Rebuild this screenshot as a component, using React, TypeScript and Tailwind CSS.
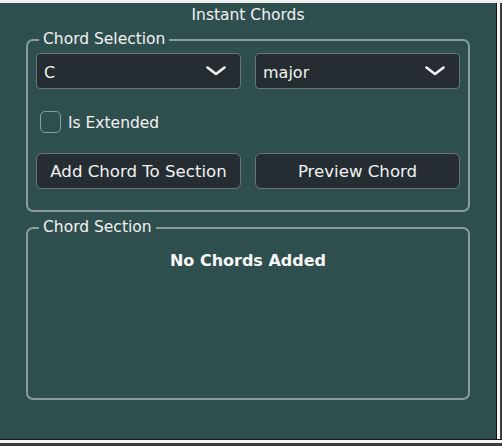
import React from "react";

const font = { fontFamily: '"DejaVu Sans", Verdana, sans-serif' };

function Chevron() {
  return (
    <svg width="20" height="10" viewBox="0 0 20 10" fill="none">
      <polyline points="1.5,1.5 10,8 18.5,1.5" stroke="#f2f2f2" strokeWidth="2.6" strokeLinecap="round" strokeLinejoin="round" />
    </svg>
  );
}

function Select({ value }: { value: string }) {
  return (
    <div className="flex h-[36px] w-[205px] items-center justify-between rounded-[4px] border border-[#66767a] bg-[#252d32] pl-[7px] pr-[14px] text-[16px] text-[#f2f2f2]">
      <span className="pt-[3px]">{value}</span>
      <Chevron />
    </div>
  );
}

function Button({ label }: { label: string }) {
  return (
    <div className="flex h-[36px] w-[205px] items-center justify-center rounded-[6px] border border-[#66767a] bg-[#252d32] pt-[3px] text-[16.6px] text-[#f2f2f2]">
      {label}
    </div>
  );
}

function Group({ title, children, className }: { title: string; children: React.ReactNode; className?: string }) {
  return (
    <div className={"relative h-[173px] rounded-[7px] border-2 border-[#8a9d9d] " + (className ?? "")}>
      <span className="absolute -top-[11px] left-[11px] bg-[#2f4f4f] px-[4px] text-[15.5px] leading-[18px] text-[#f2f2f2]">
        {title}
      </span>
      {children}
    </div>
  );
}

export default function App() {
  return (
    <div className="flex h-[446px] w-[502px] flex-col bg-[#3c3c3c]" style={font}>
      <div className="h-[3px] w-full bg-[#f0f0f0]" />
      <div className="flex h-[436px]">
        <div className="flex h-full w-[496px] flex-col bg-[#2f4f4f] px-[26px]">
          <div className="mt-[2px] h-[20px] text-center text-[15.5px] leading-[20px] text-[#f2f2f2]">Instant Chords</div>
          <Group title="Chord Selection" className="mt-[14px]">
            <div className="flex flex-col px-[8px] pt-[12px]">
              <div className="flex gap-[14px]">
                <Select value="C" />
                <Select value="major" />
              </div>
              <div className="mt-[22px] flex h-[22px] items-center gap-[7px] pl-[4px]">
                <div className="h-[22px] w-[21px] rounded-[5px] border border-[#8a9d9d]" />
                <span className="pt-[3px] text-[15.5px] text-[#f2f2f2]">Is Extended</span>
              </div>
              <div className="mt-[20px] flex gap-[14px]">
                <Button label="Add Chord To Section" />
                <Button label="Preview Chord" />
              </div>
            </div>
          </Group>
          <Group title="Chord Section" className="mt-[15px]">
            <div className="pt-[22px] text-center text-[16px] font-bold leading-[20px] text-[#f7f7f7]">No Chords Added</div>
          </Group>
        </div>
        <div className="h-full w-[1px] bg-[#151515]" />
        <div className="h-full w-[3px] bg-[#f4f4f4]" />
        <div className="h-full w-[2px] bg-[#3c3c3c]" />
      </div>
      <div className="h-[1px] w-full bg-[#151515]" />
      <div className="h-[3px] w-full bg-[#f4f4f4]" />
    </div>
  );
}
